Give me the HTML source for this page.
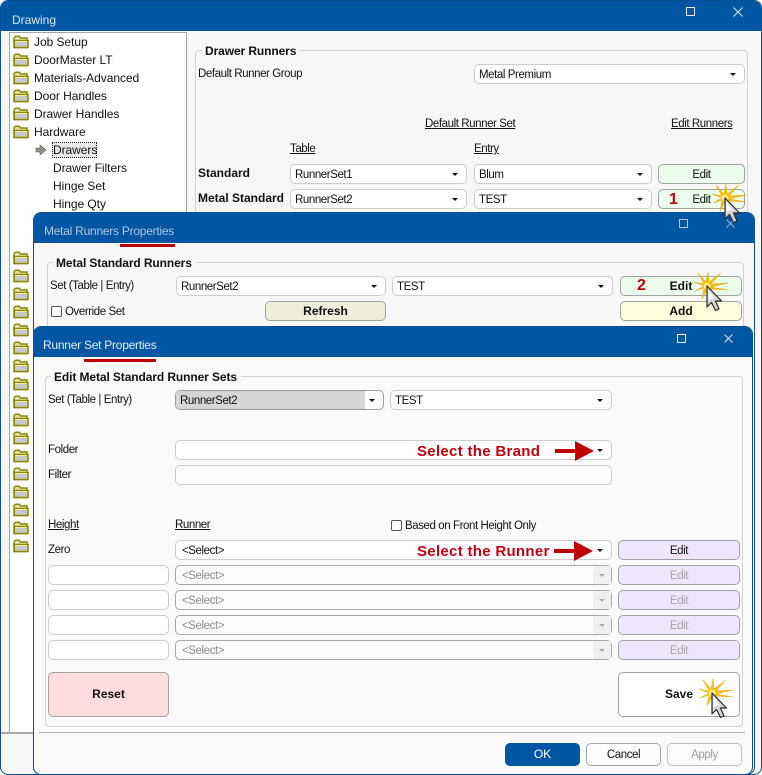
<!DOCTYPE html>
<html><head><meta charset="utf-8"><style>
html,body{margin:0;padding:0;background:#fff;width:762px;height:775px;overflow:hidden}
body{position:relative;font:11.5px/14px "Liberation Sans",sans-serif;letter-spacing:-.42px;color:#111}
div,span{position:absolute;box-sizing:border-box;white-space:nowrap}
.win{border:1px solid #0b4f92;border-radius:8px;overflow:hidden;background:#f7f7f7}
.bar{left:0;top:0;right:0;background:#0056a3}
.t{height:14px;line-height:16px}
.tr{font-size:12px;letter-spacing:-.05px}
.ti{font-size:12px;letter-spacing:-.25px}
.b{font-weight:bold;font-size:12px;letter-spacing:0}
.t.b,.t.tr,.t.ti{line-height:14px}
.u{text-decoration:underline}
.gb{border:1px solid #d2d2d2;border-radius:4px}
.lg{background:#f7f7f7;font-weight:bold;font-size:12px;letter-spacing:-.1px;height:14px;line-height:14px;padding:0 4px 0 3px;color:#111}
.c{background:#fff;border:1px solid #cdcdcd;border-radius:5px;height:20px;line-height:20px;padding-left:4px}
.c.a:after{content:"";position:absolute;right:8px;top:8px;border:3px solid transparent;border-top:3px solid #111;border-bottom:0}
.d{background:#fbfbfb;border:1px solid #a8a8a8;border-radius:5px;height:20px;line-height:20px;padding-left:6px;color:#8e8e8e}
.d i{position:absolute;right:0;top:0;width:18px;height:18px;background:#f0f0f0}
.d i:after{content:"";position:absolute;left:6px;top:8px;border:3px solid transparent;border-top:3px solid #aaa;border-bottom:0}
.btn{border:1px solid #a3a3a3;border-radius:5px;text-align:center;height:20px;line-height:20px}
.btn.b{line-height:18px}
.rl{background:#c00000;height:3px}
.sel{color:#c00010;font-weight:bold;font-size:15px;letter-spacing:.3px;height:16px;line-height:16px}
svg{position:absolute;overflow:visible}
</style></head><body>
<svg width="0" height="0" style="left:0;top:0"><defs>
<g id="fo"><path d="M1 12.500V3L2.500 1.200H6L7.500 3H14V12.500z" fill="#e6e4ae" stroke="#8d8600" stroke-width="1.500"/><path d="M1.200 12.500V5.500H15V12.500z" fill="#c8c8c8" stroke="#8d8600" stroke-width="1.500"/><path d="M2 6.500H14" stroke="#f2ef9a"/></g>
<g id="star"><path d="M21-3L4-2L14-13L2-4L1-14L-1-4L-9-13L-3-2L-13-4L-3 0L-12 5L-3 2L-5 13L0 4L3 12L3 3L21 4L4 1z" fill="#f7bf12" stroke="#e8a900" stroke-width=".5"/><circle r="3.500" fill="#ffe88a"/></g>
<g id="cur"><path d="M0 0V21L4.500 16.500L8.500 24.500L12 23L8.500 15H14.500z" fill="#d4d4d4" stroke="#2a2a2a" stroke-width="1.200" stroke-linejoin="round"/><path d="M1.500 3.500V15L4.500 12.500L7.500 12.500z" fill="#fff"/></g>
</defs></svg>

<!-- WINDOW 1 -->
<div class="win" style="left:0;top:0;width:762px;height:775px">
 <div class="bar" style="height:30px"></div>
 <div class="t ti" style="left:11px;top:12px;color:#dce6f2;letter-spacing:0">Drawing</div>
 <div style="left:685px;top:6px;width:9px;height:9px;border:1px solid #e8eef6"></div>
 <svg style="left:732px;top:6px" width="10" height="10"><path d="M.5 .5L9.500 9.500M9.500 .5L.5 9.500" stroke="#dce6f2"/></svg>
 <div style="left:8px;top:31px;width:178px;height:701px;background:#fff;border:1px solid #a5a5a5"></div>
 <div style="left:0;top:731px;width:100px;height:2px;background:#a8a8a8"></div>
</div>
<svg style="left:13px;top:35px" width="16" height="13"><use href="#fo"/></svg><div class="t tr" style="left:34px;top:35px">Job Setup</div>
<svg style="left:13px;top:53px" width="16" height="13"><use href="#fo"/></svg><div class="t tr" style="left:34px;top:53px">DoorMaster LT</div>
<svg style="left:13px;top:71px" width="16" height="13"><use href="#fo"/></svg><div class="t tr" style="left:34px;top:71px">Materials-Advanced</div>
<svg style="left:13px;top:89px" width="16" height="13"><use href="#fo"/></svg><div class="t tr" style="left:34px;top:89px">Door Handles</div>
<svg style="left:13px;top:107px" width="16" height="13"><use href="#fo"/></svg><div class="t tr" style="left:34px;top:107px">Drawer Handles</div>
<svg style="left:13px;top:125px" width="16" height="13"><use href="#fo"/></svg><div class="t tr" style="left:34px;top:125px">Hardware</div>
<svg style="left:36px;top:145px" width="10" height="10"><path d="M0 3h4V0l6 5l-6 5V7H0z" fill="#8f8f8f" stroke="#5d6b3a" stroke-width=".6"/></svg>
<div style="left:52px;top:142px;width:45px;height:16px;background:#e9e9e9;border:1px dotted #222"></div>
<div class="t tr" style="left:53px;top:143px">Drawers</div>
<div class="t tr" style="left:53px;top:161px">Drawer Filters</div>
<div class="t tr" style="left:53px;top:179px">Hinge Set</div>
<div class="t tr" style="left:53px;top:197px">Hinge Qty</div>
<svg style="left:13px;top:251px" width="16" height="13"><use href="#fo"/></svg>
<svg style="left:13px;top:269px" width="16" height="13"><use href="#fo"/></svg>
<svg style="left:13px;top:287px" width="16" height="13"><use href="#fo"/></svg>
<svg style="left:13px;top:305px" width="16" height="13"><use href="#fo"/></svg>
<svg style="left:13px;top:323px" width="16" height="13"><use href="#fo"/></svg>
<svg style="left:13px;top:341px" width="16" height="13"><use href="#fo"/></svg>
<svg style="left:13px;top:359px" width="16" height="13"><use href="#fo"/></svg>
<svg style="left:13px;top:377px" width="16" height="13"><use href="#fo"/></svg>
<svg style="left:13px;top:395px" width="16" height="13"><use href="#fo"/></svg>
<svg style="left:13px;top:413px" width="16" height="13"><use href="#fo"/></svg>
<svg style="left:13px;top:431px" width="16" height="13"><use href="#fo"/></svg>
<svg style="left:13px;top:449px" width="16" height="13"><use href="#fo"/></svg>
<svg style="left:13px;top:467px" width="16" height="13"><use href="#fo"/></svg>
<svg style="left:13px;top:485px" width="16" height="13"><use href="#fo"/></svg>
<svg style="left:13px;top:503px" width="16" height="13"><use href="#fo"/></svg>
<svg style="left:13px;top:521px" width="16" height="13"><use href="#fo"/></svg>
<svg style="left:13px;top:539px" width="16" height="13"><use href="#fo"/></svg>

<div class="gb" style="left:195px;top:50px;width:553px;height:200px"></div>
<div class="lg" style="left:202px;top:44px">Drawer Runners</div>
<div class="t" style="left:198px;top:66px">Default Runner Group</div>
<div class="c a" style="left:474px;top:64px;width:271px">Metal Premium</div>
<div class="t u" style="left:425px;top:116px">Default Runner Set</div>
<div class="t u" style="left:671px;top:116px">Edit Runners</div>
<div class="t u" style="left:290px;top:141px">Table</div>
<div class="t u" style="left:474px;top:141px">Entry</div>
<div class="t b" style="left:198px;top:166px">Standard</div>
<div class="t b" style="left:198px;top:191px">Metal Standard</div>
<div class="c a" style="left:290px;top:164px;width:177px">RunnerSet1</div>
<div class="c a" style="left:474px;top:164px;width:178px">Blum</div>
<div class="btn" style="left:658px;top:164px;width:87px;background:#ebfdeb">Edit</div>
<div class="c a" style="left:290px;top:189px;width:177px">RunnerSet2</div>
<div class="c a" style="left:474px;top:189px;width:178px">TEST</div>
<div class="btn" style="left:658px;top:189px;width:87px;background:#ebfdeb">Edit</div>
<div class="b" style="left:669px;top:192px;font-size:16px;line-height:16px;color:#c00010">1</div>

<!-- WINDOW 2 -->
<div class="win" style="left:33px;top:212px;width:722px;height:563px;background:#f8f8f8">
 <div class="bar" style="height:30px"></div>
</div>
<div class="t ti" style="left:44px;top:224px;color:#b4c6da">Metal Runners Properties</div>
<div class="rl" style="left:120px;top:244px;width:55px"></div>
<div style="left:679px;top:219px;width:9px;height:9px;border:1px solid #b4c6da"></div>
<svg style="left:726px;top:219px" width="9" height="9"><path d="M.5 .5L8.500 8.500M8.500 .5L.5 8.500" stroke="#9fb6cf"/></svg>
<div class="gb" style="left:47px;top:262px;width:697px;height:80px"></div>
<div class="lg" style="left:53px;top:256px;background:#f8f8f8">Metal Standard Runners</div>
<div class="t" style="left:50px;top:278px">Set (Table | Entry)</div>
<div class="c a" style="left:176px;top:276px;width:210px">RunnerSet2</div>
<div class="c a" style="left:392px;top:276px;width:221px">TEST</div>
<div class="btn b" style="left:620px;top:276px;width:122px;background:#ebfdeb">Edit</div>
<div class="b" style="left:637px;top:278px;font-size:16px;line-height:16px;color:#c00010">2</div>
<div style="left:51px;top:306px;width:11px;height:11px;border:1px solid #555;border-radius:2px;background:#fff"></div>
<div class="t" style="left:65px;top:304px">Override Set</div>
<div class="btn b" style="left:265px;top:301px;width:121px;background:#eeeeda">Refresh</div>
<div class="btn b" style="left:620px;top:301px;width:122px;background:#fdfddc">Add</div>

<!-- WINDOW 3 -->
<div class="win" style="left:33px;top:326px;width:720px;height:449px;background:#fafafa">
 <div class="bar" style="height:30px"></div>
</div>
<div class="t ti" style="left:43px;top:338px;color:#e3ebf4">Runner Set Properties</div>
<div class="rl" style="left:84px;top:359px;width:72px"></div>
<div style="left:677px;top:334px;width:9px;height:9px;border:1px solid #eef3f9"></div>
<svg style="left:724px;top:334px" width="9" height="9"><path d="M.5 .5L8.500 8.500M8.500 .5L.5 8.500" stroke="#dce6f2"/></svg>
<div class="gb" style="left:45px;top:376px;width:698px;height:351px"></div>
<div class="lg" style="left:51px;top:370px;background:#fafafa">Edit Metal Standard Runner Sets</div>
<div class="t" style="left:48px;top:392px">Set (Table | Entry)</div>
<div class="c a" style="left:175px;top:390px;width:209px;border-color:#a0a0a0;overflow:hidden">
 <div style="left:0;top:0;width:189px;height:18px;background:#d6d6d6"></div><span style="left:4px;top:0">RunnerSet2</span></div>
<div class="c a" style="left:390px;top:390px;width:222px">TEST</div>
<div class="t" style="left:48px;top:442px">Folder</div>
<div class="c a" style="left:175px;top:440px;width:437px"></div>
<div class="t" style="left:48px;top:467px">Filter</div>
<div class="c" style="left:175px;top:465px;width:437px;background:#fcfcfc"></div>
<div class="t u" style="left:48px;top:517px">Height</div>
<div class="t u" style="left:175px;top:517px">Runner</div>
<div style="left:391px;top:520px;width:11px;height:11px;border:1px solid #555;border-radius:2px;background:#fff"></div>
<div class="t" style="left:405px;top:518px">Based on Front Height Only</div>
<div class="t" style="left:48px;top:542px">Zero</div>
<div class="c a" style="left:175px;top:540px;width:437px;padding-left:6px">&lt;Select&gt;</div>
<div class="btn" style="left:618px;top:540px;width:122px;background:#efe6fd">Edit</div>

<div class="c" style="left:48px;top:565px;width:121px"></div>
<div class="d" style="left:175px;top:565px;width:437px">&lt;Select&gt;<i></i></div>
<div class="btn" style="left:618px;top:565px;width:122px;background:#efe6fd;color:#a5a5a5">Edit</div>
<div class="c" style="left:48px;top:590px;width:121px"></div>
<div class="d" style="left:175px;top:590px;width:437px">&lt;Select&gt;<i></i></div>
<div class="btn" style="left:618px;top:590px;width:122px;background:#efe6fd;color:#a5a5a5">Edit</div>
<div class="c" style="left:48px;top:615px;width:121px"></div>
<div class="d" style="left:175px;top:615px;width:437px">&lt;Select&gt;<i></i></div>
<div class="btn" style="left:618px;top:615px;width:122px;background:#efe6fd;color:#a5a5a5">Edit</div>
<div class="c" style="left:48px;top:640px;width:121px"></div>
<div class="d" style="left:175px;top:640px;width:437px">&lt;Select&gt;<i></i></div>
<div class="btn" style="left:618px;top:640px;width:122px;background:#efe6fd;color:#a5a5a5">Edit</div>

<div class="btn b" style="left:48px;top:672px;width:121px;height:45px;line-height:43px;background:#fddcdc">Reset</div>
<div class="btn b" style="left:618px;top:672px;width:122px;height:45px;line-height:43px;background:#fff">Save</div>
<div style="left:39px;top:732px;width:706px;height:1px;background:#b0b0b0"></div>
<div class="btn" style="left:505px;top:743px;width:75px;height:23px;line-height:21px;background:#0056a3;border-color:#0056a3;color:#fff;font-size:12px;letter-spacing:0">OK</div>
<div class="btn" style="left:586px;top:743px;width:75px;height:23px;line-height:23px;background:#fdfdfd">Cancel</div>
<div class="btn" style="left:667px;top:743px;width:75px;height:23px;line-height:23px;background:#fbfbfb;border-color:#c0c0c0;color:#9c9c9c">Apply</div>

<div class="sel" style="left:417px;top:444px">Select the Brand</div>
<svg style="left:555px;top:441px" width="40" height="20"><path d="M0 8h20V0l19 10L20 20v-8H0z" fill="#c00000"/></svg>
<div class="sel" style="left:417px;top:544px">Select the Runner</div>
<svg style="left:554px;top:541px" width="40" height="20"><path d="M0 8h20V0l19 10L20 20v-8H0z" fill="#c00000"/></svg>

<svg style="left:725px;top:198px" width="22" height="26"><use href="#star"/><use href="#cur"/></svg>
<svg style="left:707px;top:286px" width="22" height="26"><use href="#star"/><use href="#cur"/></svg>
<svg style="left:712px;top:693px" width="22" height="26"><use href="#star"/><use href="#cur"/></svg>
</body></html>
